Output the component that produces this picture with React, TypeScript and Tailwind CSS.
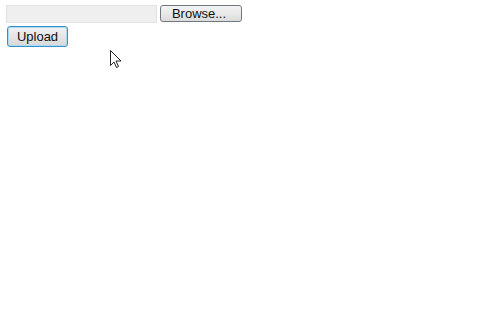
export default function App() {
  return (
    <div className="min-h-[327px] w-[477px] bg-white relative" style={{ fontFamily: '"Liberation Sans", Arial, sans-serif' }}>
      <div className="pl-[6px] pt-[5px]">
        <div className="flex items-start gap-[3px]">
          <div className="w-[151px] h-[18px] bg-[#efefef] border border-[#e2e2e2]" />
          <button className="w-[82px] h-[17px] rounded-[3px] border border-[#6f7880] bg-gradient-to-b from-[#f4f4f4] to-[#dcdcdc] text-[13px] leading-none text-[#111] flex items-center justify-center pr-[4px]">
            Browse...
          </button>
        </div>
        <div className="mt-[3px] pl-[1px]">
          <button className="w-[61px] h-[21px] rounded-[3px] border border-[#3c8fc4] shadow-[inset_0_0_0_1px_#a8dcf2] bg-gradient-to-b from-[#f2f2f2] to-[#d8d8d8] text-[13px] leading-none text-[#111] flex items-center justify-center">
            Upload
          </button>
        </div>
      </div>
      <svg className="absolute left-[110px] top-[50px]" width="12" height="19" viewBox="0 0 12 19">
        <path d="M0.5 0.5 L0.5 15.5 L4 12 L6.5 17.5 L8.5 16.5 L6 11 L11 11 Z" fill="white" stroke="#222" strokeWidth="1" strokeLinejoin="miter" />
      </svg>
    </div>
  );
}
